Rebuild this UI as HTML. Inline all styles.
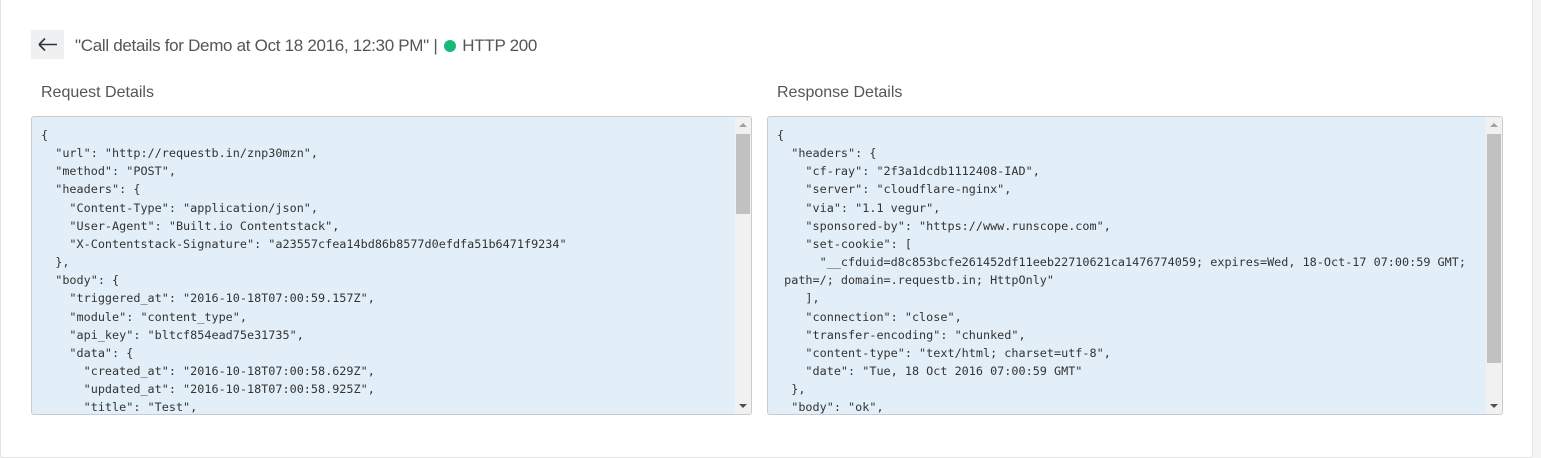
<!DOCTYPE html>
<html><head><style>
body{margin:0;width:1541px;height:458px;background:#f4f4f4;font-family:"Liberation Sans",sans-serif;overflow:hidden;position:relative}
.card{position:absolute;left:0;top:-2px;width:1531px;height:458px;background:#fff;border:1px solid #e3e3e3;border-radius:3px}
.back{position:absolute;left:31px;top:30px;width:33px;height:29px;background:#eef0f1}
.title{position:absolute;left:75px;top:36px;font-size:17px;color:#555;white-space:nowrap;letter-spacing:-0.3px}
.dot{display:inline-block;width:12px;height:12px;border-radius:50%;background:#17b978;vertical-align:-1px;margin:0 2px}
.h{position:absolute;top:84px;font-size:16px;color:#555}
.box{position:absolute;top:116px;height:297px;background:#e2eff8;border:1px solid #c8ccd0;border-radius:3px;overflow:hidden}
.box pre{margin:0;padding:9px 0 0 9px;font-family:"DejaVu Sans Mono","Liberation Mono",monospace;font-size:11.8px;line-height:18.15px;color:#333;white-space:pre-wrap}
.sb{position:absolute;right:0;top:0;width:16px;height:297px;background:#f1f1f1}
.th{position:absolute;left:1px;width:14px;background:#c1c1c1}
.ar{position:absolute;left:4px;width:0;height:0;border-left:4px solid transparent;border-right:4px solid transparent}
</style></head><body>
<div class="card"></div>
<div class="back"><svg width="33" height="29"><path d="M8 14.5H26M8 14.5L14 8.5M8 14.5L14 20.5" stroke="#333" stroke-width="1.6" fill="none"/></svg></div>
<div class="title">"Call details for Demo at Oct 18 2016, 12:30 PM" | <span class="dot"></span> HTTP 200</div>
<div class="h" style="left:41px">Request Details</div>
<div class="h" style="left:777px">Response Details</div>
<div class="box" style="left:31px;width:719px">
<pre>{
  "url": "http://requestb.in/znp30mzn",
  "method": "POST",
  "headers": {
    "Content-Type": "application/json",
    "User-Agent": "Built.io Contentstack",
    "X-Contentstack-Signature": "a23557cfea14bd86b8577d0efdfa51b6471f9234"
  },
  "body": {
    "triggered_at": "2016-10-18T07:00:59.157Z",
    "module": "content_type",
    "api_key": "bltcf854ead75e31735",
    "data": {
      "created_at": "2016-10-18T07:00:58.629Z",
      "updated_at": "2016-10-18T07:00:58.925Z",
      "title": "Test",</pre>
<div class="sb"><div class="ar" style="top:6px;border-bottom:4px solid #a0a0a0"></div><div class="th" style="top:17px;height:80px"></div><div class="ar" style="bottom:6px;border-top:4px solid #505050"></div></div>
</div>
<div class="box" style="left:767px;width:734px">
<pre style="padding-right:20px">{
  "headers": {
    "cf-ray": "2f3a1dcdb1112408-IAD",
    "server": "cloudflare-nginx",
    "via": "1.1 vegur",
    "sponsored-by": "https://www.runscope.com",
    "set-cookie": [
      "__cfduid=d8c853bcfe261452df11eeb22710621ca1476774059; expires=Wed, 18-Oct-17 07:00:59 GMT;
 path=/; domain=.requestb.in; HttpOnly"
    ],
    "connection": "close",
    "transfer-encoding": "chunked",
    "content-type": "text/html; charset=utf-8",
    "date": "Tue, 18 Oct 2016 07:00:59 GMT"
  },
  "body": "ok",</pre>
<div class="sb"><div class="ar" style="top:6px;border-bottom:4px solid #a0a0a0"></div><div class="th" style="top:17px;height:229px"></div><div class="ar" style="bottom:6px;border-top:4px solid #505050"></div></div>
</div>
</body></html>
